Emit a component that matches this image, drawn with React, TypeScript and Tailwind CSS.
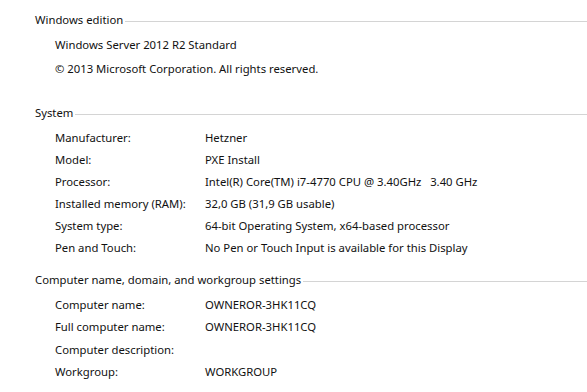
const edition = ["Windows Server 2012 R2 Standard", "© 2013 Microsoft Corporation. All rights reserved."];

const system: [string, string][] = [
  ["Manufacturer:", "Hetzner"],
  ["Model:", "PXE Install"],
  ["Processor:", "Intel(R) Core(TM) i7-4770 CPU @ 3.40GHz   3.40 GHz"],
  ["Installed memory (RAM):", "32,0 GB (31,9 GB usable)"],
  ["System type:", "64-bit Operating System, x64-based processor"],
  ["Pen and Touch:", "No Pen or Touch Input is available for this Display"],
];

const computer: [string, string][] = [
  ["Computer name:", "OWNEROR-3HK11CQ"],
  ["Full computer name:", "OWNEROR-3HK11CQ"],
  ["Computer description:", ""],
  ["Workgroup:", "WORKGROUP"],
];

function Heading({ title }: { title: string }) {
  return (
    <div className="flex items-center h-[24px] pl-[35px]">
      <span>{title}</span>
      <div className="flex-1 h-px bg-[#d4d4d4] ml-[2px] mt-[2px]" />
    </div>
  );
}

function Row({ label, value, h }: { label: string; value: string; h: string }) {
  return (
    <div className={`flex items-center pl-[55px] ${h}`}>
      <span className="w-[150px] shrink-0">{label}</span>
      <span className="whitespace-pre">{value}</span>
    </div>
  );
}

export default function App() {
  return (
    <div
      className="w-[587px] h-[392px] bg-white text-[11.3px] text-[#111] overflow-hidden pt-[8px]"
      style={{ fontFamily: '"Noto Sans", "Open Sans", sans-serif' }}
    >
      {/* Windows edition */}
      <section>
        <Heading title="Windows edition" />
        <div className="pt-[1px]">
          {edition.map((t) => (
            <div key={t} className="flex items-center h-[24px] pl-[55px]">
              {t}
            </div>
          ))}
        </div>
      </section>

      {/* System */}
      <section className="mt-[20px]">
        <Heading title="System" />
        <div className="pt-[2px]">
          {system.map(([l, v]) => (
            <Row key={l} label={l} value={v} h="h-[22px]" />
          ))}
        </div>
      </section>

      {/* Computer name */}
      <section className="mt-[9px]">
        <Heading title="Computer name, domain, and workgroup settings" />
        <div className="pt-[2px]">
          {computer.map(([l, v]) => (
            <Row key={l} label={l} value={v} h="h-[22.5px]" />
          ))}
        </div>
      </section>
    </div>
  );
}
